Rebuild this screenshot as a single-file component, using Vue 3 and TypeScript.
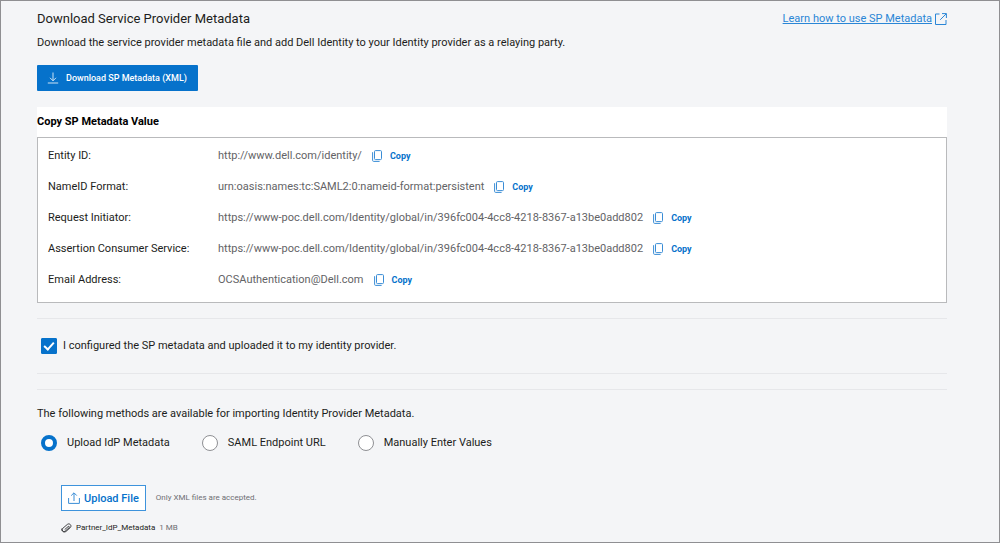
<script setup lang="ts">
import { ref } from 'vue'

interface MetadataRow {
  label: string
  value: string
}

interface ImportMethod {
  id: string
  label: string
}

const rows: MetadataRow[] = [
  { label: 'Entity ID:', value: 'http://www.dell.com/identity/' },
  { label: 'NameID Format:', value: 'urn:oasis:names:tc:SAML2:0:nameid-format:persistent' },
  { label: 'Request Initiator:', value: 'https://www-poc.dell.com/Identity/global/in/396fc004-4cc8-4218-8367-a13be0add802' },
  { label: 'Assertion Consumer Service:', value: 'https://www-poc.dell.com/Identity/global/in/396fc004-4cc8-4218-8367-a13be0add802' },
  { label: 'Email Address:', value: 'OCSAuthentication@Dell.com' },
]

const methods: ImportMethod[] = [
  { id: 'upload', label: 'Upload IdP Metadata' },
  { id: 'endpoint', label: 'SAML Endpoint URL' },
  { id: 'manual', label: 'Manually Enter Values' },
]

const configured = ref(true)
const method = ref('upload')

function copy(value: string) {
  navigator.clipboard?.writeText(value)
}
</script>

<template>
  <main class="page">
    <header class="head">
      <h1>Download Service Provider Metadata</h1>
      <a class="learn" href="#sp-metadata">
        <span>Learn how to use SP Metadata</span>
        <svg width="12" height="12" viewBox="0 0 12 12" fill="none" stroke="currentColor" aria-hidden="true">
          <path d="M4.5 1H.5v10.5H11V7M7 .6h4.4V5M11.2.8 5.2 6.8" />
        </svg>
      </a>
    </header>
    <p class="intro">Download the service provider metadata file and add Dell Identity to your Identity provider as a relaying party.</p>
    <button type="button" class="download">
      <svg width="12" height="12" viewBox="0 0 12 12" fill="none" stroke="currentColor" stroke-width=".8" aria-hidden="true">
        <path d="M6 .5v8M3 5.8l3 3 3-3M.8 11h10.4" />
      </svg>
      Download SP Metadata (XML)
    </button>

    <section class="values">
      <h2 id="values-title">Copy SP Metadata Value</h2>
      <div class="box">
        <table aria-labelledby="values-title">
          <tbody>
            <tr v-for="row in rows" :key="row.label">
              <th scope="row">{{ row.label }}</th>
              <td>
                <div class="value">
                  <span>{{ row.value }}</span>
                  <button type="button" class="copy" @click="copy(row.value)">
                    <svg width="10" height="12" viewBox="0 0 10 12" fill="none" stroke="#3a8dd6" aria-hidden="true">
                      <rect x="2.5" y=".6" width="7" height="9" rx="1" />
                      <path d="M.6 2.2v8.2a1 1 0 0 0 1 1h6" />
                    </svg>
                    Copy
                  </button>
                </div>
              </td>
            </tr>
          </tbody>
        </table>
      </div>
    </section>

    <div class="confirm">
      <label>
        <input v-model="configured" type="checkbox" />
        I configured the SP metadata and uploaded it to my identity provider.
      </label>
    </div>

    <fieldset class="import">
      <legend>The following methods are available for importing Identity Provider Metadata.</legend>
      <div class="methods">
        <label v-for="m in methods" :key="m.id">
          <input v-model="method" type="radio" name="method" :value="m.id" />
          {{ m.label }}
        </label>
      </div>
    </fieldset>

    <div class="upload">
      <div class="upload-row">
        <button type="button" class="upload-button">
          <svg width="12" height="12" viewBox="0 0 12 12" fill="none" stroke="#3a8dd6" aria-hidden="true">
            <path d="M6 9V1M3.2 3.6 6 .8l2.8 2.8M.6 6v5.400h10.800V6" />
          </svg>
          Upload File
        </button>
        <span class="hint">Only XML files are accepted.</span>
      </div>
      <div class="file">
        <svg width="11" height="10" viewBox="0 0 24 22" fill="none" stroke="currentColor" stroke-width="1.8" aria-hidden="true">
          <path d="M8 14.500 15.500 8c2-1.600 4 .8 2.200 2.500L9 18c-3.500 3-9-2-5.500-6L14 3c4.500-3.500 10.500 2.500 6.500 7L11 18.500c-4.500 3.500-11-1-9-6.500" />
        </svg>
        <span>Partner_IdP_Metadata</span>
        <span class="size">1 MB</span>
      </div>
    </div>
  </main>
</template>

<style>
body {
  margin: 0;
  background: #f4f5f7;
}
</style>

<style scoped>
.page {
  box-sizing: border-box;
  min-height: 100vh;
  padding: 8px 52px 0 36px;
  border: 1px solid #8f8f92;
  background: #f4f5f7;
  color: #1c1d20;
  font: 11px/20px Roboto, "Liberation Sans", sans-serif;
}

button {
  display: inline-flex;
  align-items: center;
  box-sizing: border-box;
  margin: 0;
  font-family: inherit;
  cursor: pointer;
}

svg {
  flex: none;
}

.head {
  display: flex;
  justify-content: space-between;
  align-items: center;
}

h1 {
  margin: 0;
  font-size: 13px;
  font-weight: 400;
  line-height: 20px;
}

.learn {
  display: flex;
  align-items: center;
  gap: 3px;
  color: #2a86d6;
}

.intro {
  margin: 4px 0 12px;
}

.download {
  height: 26px;
  padding: 0 11px 0 10px;
  gap: 7px;
  border: 0;
  border-radius: 1px;
  background: #0672cb;
  color: #fff;
  font-size: 9px;
  font-weight: 500;
}

.values {
  margin-top: 16px;
  background: #fff;
}

h2 {
  margin: 0;
  color: #000;
  font-size: 11px;
  font-weight: 700;
  line-height: 30px;
}

.box {
  padding: 2px 10px 7px;
  border: 1px solid #b9babc;
}

table {
  border-collapse: collapse;
}

th,
td {
  height: 31px;
  padding: 0;
  text-align: left;
  font-weight: 400;
}

th {
  width: 170px;
}

td {
  color: #636366;
}

.value {
  display: flex;
  align-items: center;
  gap: 10px;
}

.copy {
  padding: 0;
  gap: 8px;
  border: 0;
  background: none;
  color: #0672cb;
  font-size: 9px;
  font-weight: 700;
}

.confirm {
  display: flex;
  align-items: center;
  height: 54px;
  margin: 15px 0;
  padding-left: 4px;
  border: solid #e6e7ea;
  border-width: 1px 0;
}

label {
  display: flex;
  align-items: center;
}

.confirm label {
  gap: 6px;
}

input {
  appearance: none;
  box-sizing: border-box;
  flex: none;
  width: 16px;
  height: 16px;
  margin: 0;
  border: 1px solid #8f9094;
  background: #fff;
}

input[type="checkbox"] {
  display: grid;
  place-items: center;
  border-radius: 1px;
}

input[type="checkbox"]:checked {
  border-color: #0672cb;
  background: #0672cb;
}

input[type="checkbox"]:checked::before {
  content: "";
  width: 4px;
  height: 8px;
  margin-bottom: 2px;
  border: solid #fff;
  border-width: 0 2px 2px 0;
  transform: rotate(42deg);
}

input[type="radio"] {
  border-radius: 50%;
}

input[type="radio"]:checked {
  border: 4px solid #0672cb;
}

.import {
  min-width: 0;
  margin: 0;
  padding: 0;
  border: 0;
  border-top: 1px solid #e6e7ea;
}

.import legend {
  float: left;
  width: 100%;
  margin-top: 14px;
  padding: 0;
}

.methods {
  display: flex;
  clear: both;
  gap: 32px;
  padding: 9px 0 0 4px;
}

.methods label {
  gap: 10px;
}

.upload {
  padding: 32px 0 4px 24px;
}

.upload-row {
  display: flex;
  align-items: center;
  gap: 10px;
}

.upload-button {
  height: 26px;
  padding: 0 6px;
  gap: 4px;
  border: 1px solid #3d93dc;
  background: #fff;
  color: #0672cb;
  font-size: 11px;
  font-weight: 500;
}

.hint,
.file {
  font-size: 8px;
}

.hint,
.size {
  color: #6e6e73;
}

.file {
  display: flex;
  align-items: center;
  gap: 4px;
  margin-top: 7px;
}
</style>
